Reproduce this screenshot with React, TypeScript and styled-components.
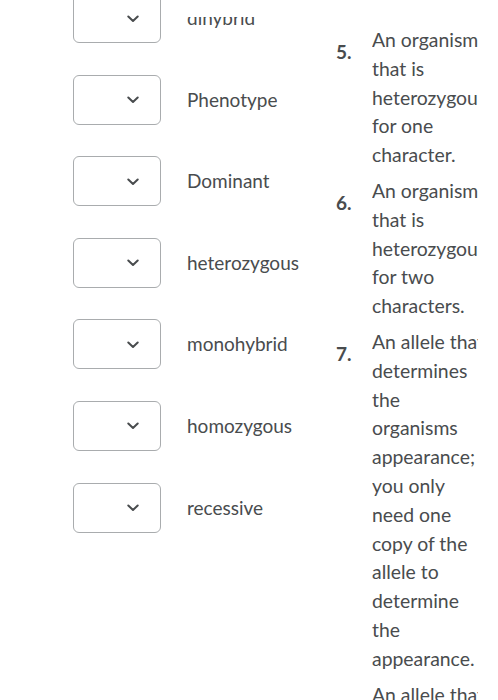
import styled, { createGlobalStyle } from "styled-components";

const GlobalStyle = createGlobalStyle`
  html, body {
    margin: 0;
    padding: 0;
    overflow: hidden;
    background: #ffffff;
  }
  body {
    font-family: Lato, "Open Sans", sans-serif;
    color: #494c4e;
  }
`;

const choices = [
  "dihybrid",
  "Phenotype",
  "Dominant",
  "heterozygous",
  "monohybrid",
  "homozygous",
  "recessive",
];

const definitions = [
  { num: 5, text: "An organism that is heterozygous for one character." },
  { num: 6, text: "An organism that is heterozygous for two characters." },
  {
    num: 7,
    text: "An allele that determines the organisms appearance; you only need one copy of the allele to determine the appearance.",
  },
  {
    num: 8,
    text: "An allele that is only expressed when two copies are present.",
  },
];

const Chevron = () => (
  <svg width="12" height="8" viewBox="0 0 12 8" aria-hidden="true">
    <path
      d="M1.3 1.5 L6 6 L10.7 1.5"
      fill="none"
      stroke="#494c4e"
      strokeWidth="2"
      strokeLinecap="round"
      strokeLinejoin="round"
    />
  </svg>
);

export default function App() {
  return (
    <>
      <GlobalStyle />
      <Page>
        <ChoiceList>
          {choices.map((label, i) => (
            <ChoiceRow key={label}>
              <Select>
                <Chevron />
              </Select>
              {/* the first row sits partly under the top edge of the pane */}
              <ChoiceLabel $clipTop={i === 0 ? 11 : 0}>{label}</ChoiceLabel>
            </ChoiceRow>
          ))}
        </ChoiceList>
        <DefinitionList>
          {definitions.map((d) => (
            <Definition key={d.num}>
              <Number>{d.num}.</Number>
              <TextCell>
                <DefinitionText>{d.text}</DefinitionText>
              </TextCell>
            </Definition>
          ))}
        </DefinitionList>
      </Page>
    </>
  );
}

const Page = styled.div`
  display: flex;
  align-items: flex-start;
  margin-top: -7px;
  width: 498px;
  overflow: hidden;
`;

const ChoiceList = styled.div`
  display: flex;
  flex-direction: column;
  gap: 31.6px;
  padding-left: 73px;
  width: 263px;
  flex-shrink: 0;
`;

const ChoiceRow = styled.div`
  display: flex;
  align-items: center;
  gap: 26px;
`;

const Select = styled.div`
  box-sizing: border-box;
  width: 88px;
  height: 50px;
  flex-shrink: 0;
  border: 1px solid #a9acae;
  border-radius: 6px;
  display: flex;
  align-items: center;
  justify-content: flex-end;
  padding-right: 21px;
  padding-top: 1px;
`;

const ChoiceLabel = styled.span<{ $clipTop: number }>`
  font-size: 19px;
  line-height: 24px;
  white-space: nowrap;
  clip-path: inset(${(p) => p.$clipTop}px 0 0 0);
`;

const DefinitionList = styled.div`
  display: flex;
  flex-direction: column;
  gap: 7px;
  padding-top: 33px;
`;

const Definition = styled.div`
  display: flex;
`;

const Number = styled.span`
  width: 36px;
  flex-shrink: 0;
  padding-top: 12px;
  font-size: 19px;
  line-height: 28.8px;
  font-weight: 700;
`;

const TextCell = styled.div`
  width: 106px;
  overflow: hidden;
`;

const DefinitionText = styled.div`
  width: 114px;
  font-size: 19.4px;
  line-height: 28.8px;
`;
